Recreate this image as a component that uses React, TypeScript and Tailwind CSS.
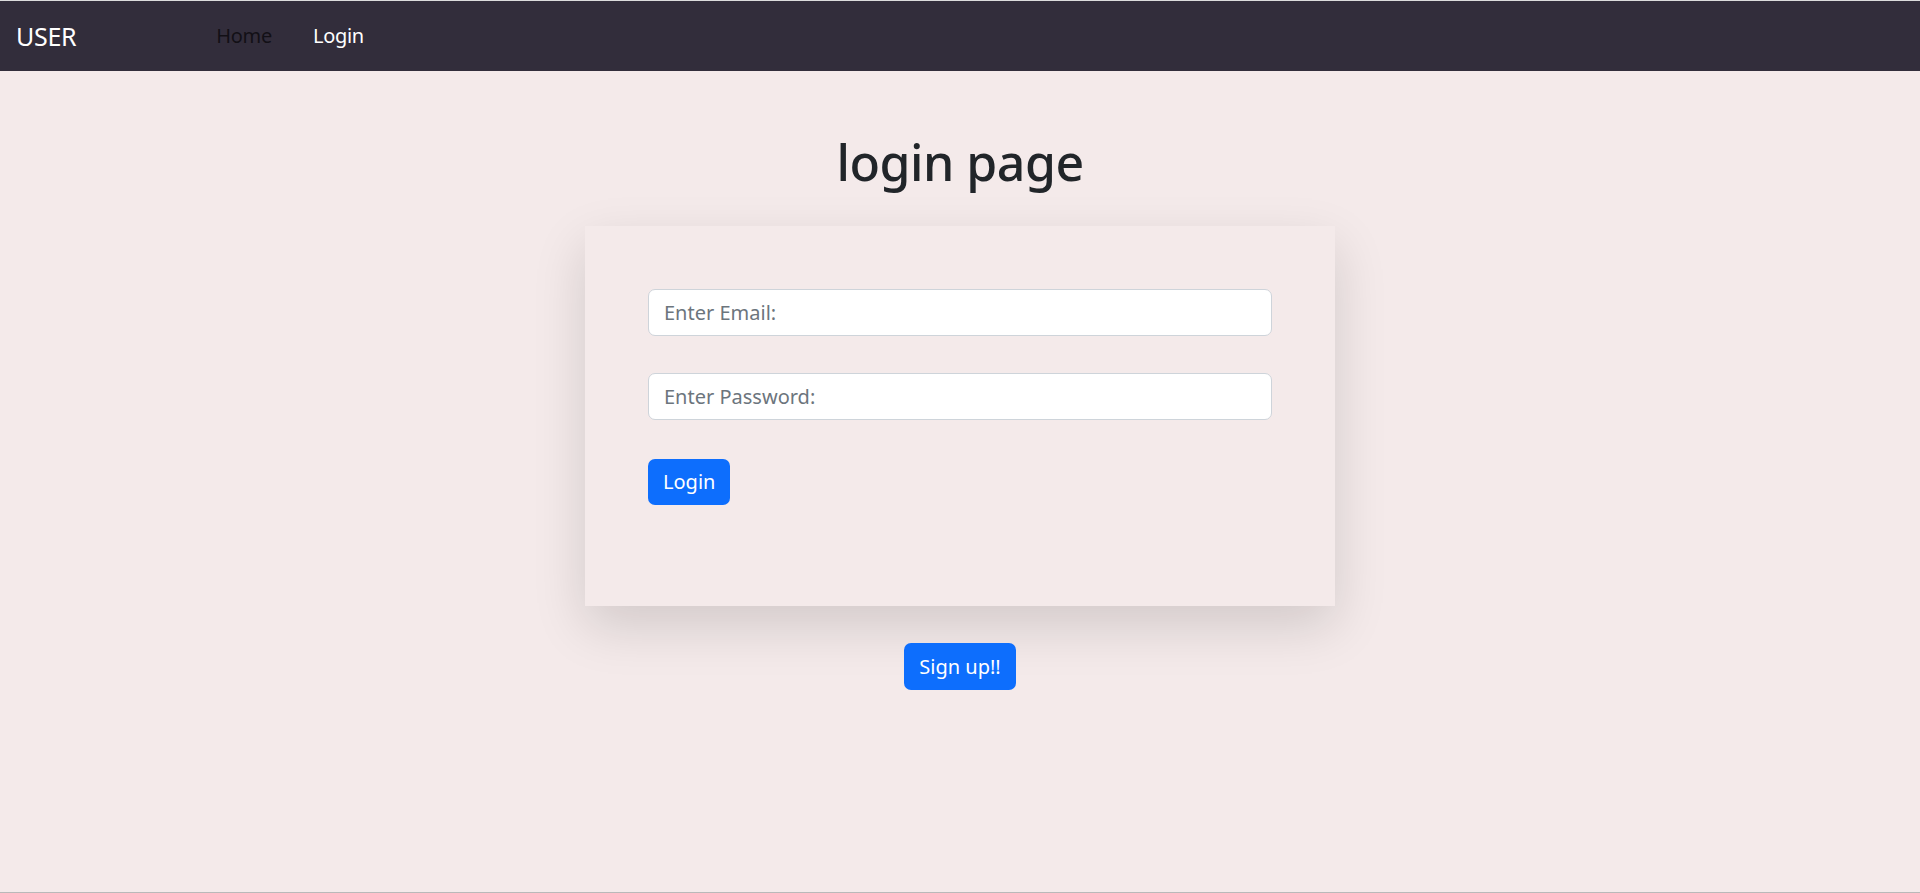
import React from "react";

export default function App() {
  const font = { fontFamily: '"Noto Sans", "Open Sans", sans-serif' };
  return (
    <div style={font} className="h-[893px] flex flex-col bg-[#f4eaea] border-t border-t-[#dcdcdc] border-b border-b-[#b9b9b9] overflow-hidden">
      <nav className="h-[70px] bg-[#322d3b] flex items-center pl-[16px] shrink-0">
        <span className="text-[25px] text-white leading-none tracking-[-0.3px]">USER</span>
        <a className="ml-[140px] text-[20px] text-[#121016] leading-none tracking-[-0.3px]">Home</a>
        <a className="ml-[41px] text-[20px] text-white leading-none tracking-[-0.3px]">Login</a>
      </nav>
      <main className="flex-1 flex flex-col items-center">
        <h1 className="mt-[61px] text-[50px] leading-[60px] font-medium text-[#212529] tracking-[-0.5px]">login page</h1>
        <div className="mt-[34px] w-[750px] bg-[#f4eaea] shadow-[0_20px_50px_rgba(0,0,0,0.14)] pt-[63px] pb-[101px] px-[63px] flex flex-col">
          <input
            style={font}
            placeholder="Enter Email:"
            className="h-[47px] w-full bg-white border border-[#ced4da] rounded-[7px] px-[15px] text-[20px] text-[#212529] placeholder:text-[#6c757d] outline-none"
          />
          <input
            style={font}
            placeholder="Enter Password:"
            className="mt-[37px] h-[47px] w-full bg-white border border-[#ced4da] rounded-[7px] px-[15px] text-[20px] text-[#212529] placeholder:text-[#6c757d] outline-none"
          />
          <div className="mt-[39px]">
            <button style={font} className="h-[46px] px-[15px] bg-[#0d6efd] text-white text-[20px] rounded-[7px] leading-none">Login</button>
          </div>
        </div>
        <button style={font} className="mt-[37px] h-[47px] px-[15px] bg-[#0d6efd] text-white text-[20px] rounded-[7px] leading-none">Sign up!!</button>
      </main>
    </div>
  );
}
